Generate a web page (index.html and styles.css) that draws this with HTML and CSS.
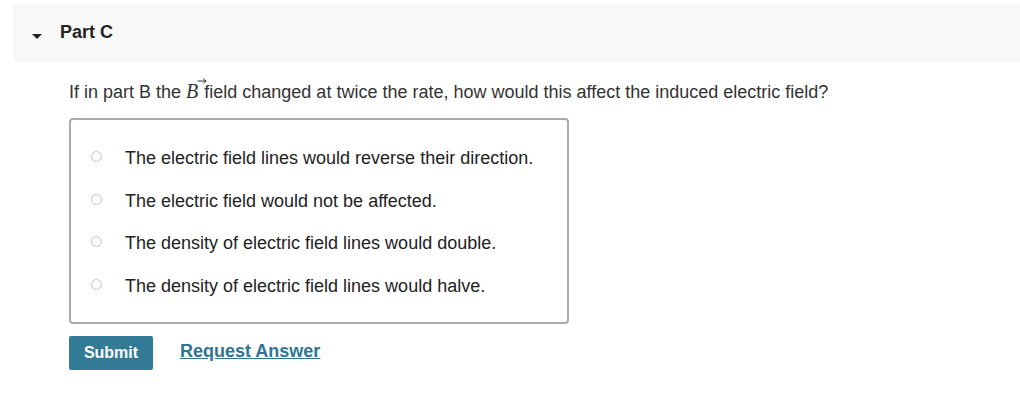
FILE: index.html
```html
<!DOCTYPE html>
<html>
<head>
<meta charset="utf-8">
<link rel="stylesheet" href="styles.css">
</head>
<body>
<div class="part-header">
  <span class="caret"></span>
  <span class="part-title">Part C</span>
</div>
<div class="content">
  <p class="question">If in part B the <span class="vec"><svg class="vec-arrow" width="10" height="6" viewBox="0 0 10 6"><path d="M0.5 3H8.8M6.4 0.9L9.2 3L6.4 5.1" fill="none" stroke="#333" stroke-width="1"/></svg><span class="vec-b">B</span></span>field changed at twice the rate, how would this affect the induced electric field?</p>
  <div class="choices">
    <label class="choice"><span class="radio"></span><span>The electric field lines would reverse their direction.</span></label>
    <label class="choice"><span class="radio"></span><span>The electric field would not be affected.</span></label>
    <label class="choice"><span class="radio"></span><span>The density of electric field lines would double.</span></label>
    <label class="choice"><span class="radio"></span><span>The density of electric field lines would halve.</span></label>
  </div>
  <div class="actions">
    <button class="submit">Submit</button>
    <a class="request" href="#">Request Answer</a>
  </div>
</div>
</body>
</html>
```
FILE: styles.css
```css
html, body {
  margin: 0;
  padding: 0;
  background: #fff;
  font-family: "Liberation Sans", Arial, Helvetica, sans-serif;
  color: #333;
}
.part-header {
  margin: 5px 0 0 13px;
  height: 57px;
  background: #f8f8f8;
  display: flex;
  align-items: center;
  padding-left: 19px;
  box-sizing: border-box;
}
.caret {
  width: 0;
  height: 0;
  border-left: 5px solid transparent;
  border-right: 5px solid transparent;
  border-top: 5px solid #222;
  margin-top: 5px;
}
.part-title {
  margin-left: 18px;
  font-weight: bold;
  font-size: 18px;
  color: #222;
  margin-top: -2px;
}
.content {
  padding-left: 69px;
}
.question {
  margin: 17px 0 0 0;
  font-size: 18px;
  line-height: 24px;
}
.vec {
  position: relative;
  display: inline-block;
  font-family: "Liberation Serif", "Times New Roman", serif;
  font-style: italic;
  font-size: 20px;
  margin-right: 6px;
}
.vec-arrow {
  position: absolute;
  left: 11px;
  top: -1px;
}
.choices {
  margin-top: 14px;
  width: 500px;
  height: 206px;
  box-sizing: border-box;
  border: 2px solid #aaa;
  border-radius: 4px;
  padding: 26px 0 0 20px;
  display: flex;
  flex-direction: column;
  gap: 17.5px;
}
.choice {
  display: flex;
  align-items: center;
  font-size: 18px;
  line-height: 25px;
  color: #222;
}
.radio {
  width: 9px;
  height: 9px;
  border: 1px solid #c4c4c4;
  border-radius: 50%;
  background: #fbfbfb;
  margin-right: 23px;
  margin-top: -4px;
}
.actions {
  margin-top: 12px;
  display: flex;
  align-items: center;
  gap: 27px;
}
.submit {
  width: 84px;
  height: 34px;
  background: #337a97;
  border: none;
  border-radius: 2px;
  color: #fff;
  font-family: "Liberation Sans", Arial, sans-serif;
  font-weight: bold;
  font-size: 16px;
  padding: 0;
}
.request {
  color: #2f7592;
  font-weight: bold;
  font-size: 18px;
  text-decoration: underline;
  margin-top: -3px;
}
```
